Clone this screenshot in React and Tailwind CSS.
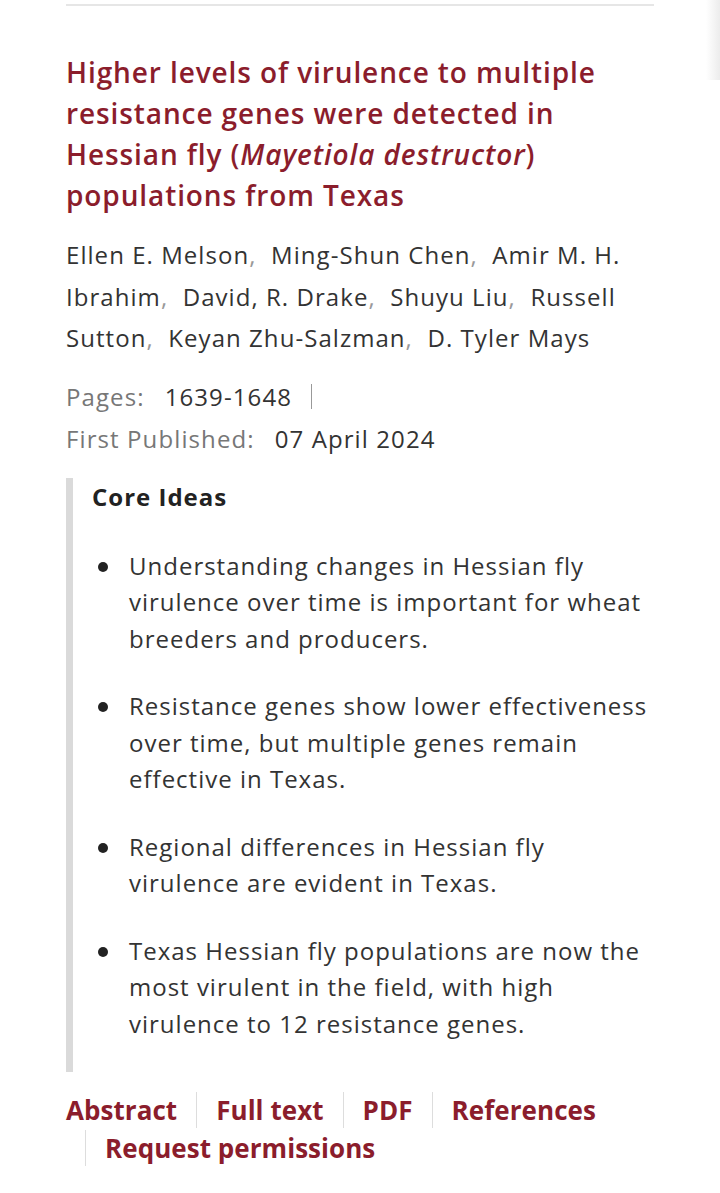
export default function App() {
  const ideas = [
    "Understanding changes in Hessian fly virulence over time is important for wheat breeders and producers.",
    "Resistance genes show lower effectiveness over time, but multiple genes remain effective in Texas.",
    "Regional differences in Hessian fly virulence are evident in Texas.",
    "Texas Hessian fly populations are now the most virulent in the field, with high virulence to 12 resistance genes.",
  ];

  const authors = [
    "Ellen E. Melson",
    "Ming-Shun Chen",
    "Amir M. H. Ibrahim",
    "David, R. Drake",
    "Shuyu Liu",
    "Russell Sutton",
    "Keyan Zhu-Salzman",
    "D. Tyler Mays",
  ];

  const links = ["Abstract", "Full text", "PDF", "References", "Request permissions"];

  return (
    <div
      className="relative min-h-[1193px] bg-white text-[#333333]"
      style={{ fontFamily: '"Open Sans", "Noto Sans", sans-serif' }}
    >
      {/* scroll shade at right edge */}
      <div className="absolute right-0 top-0 h-[80px] w-[14px] bg-gradient-to-r from-transparent to-[#ececec]" />

      <div className="px-[66px] pt-[4px]">
        <div className="border-t-2 border-[#e6e6e6]" />

        {/* TITLE */}
        <h1 className="mt-[46px] text-[28px] font-semibold leading-[41px] tracking-[0.9px] text-[#8b1d2c]">
          Higher levels of virulence to multiple resistance genes were detected in Hessian fly (
          <i>Mayetiola destructor</i>) populations from Texas
        </h1>

        {/* AUTHORS */}
        <p className="mt-[18px] text-[24px] leading-[41.5px] tracking-[1.05px]">
          {authors.map((a, i) => (
            <span key={a}>
              {a}
              {i < authors.length - 1 && <span className="text-[#999999]">,&nbsp; </span>}
            </span>
          ))}
        </p>

        {/* META */}
        <div className="mt-[17px] text-[24px] leading-[42px] tracking-[1.1px]">
          <div className="flex items-center">
            <span className="text-[#777777]">Pages:</span>
            <span className="ml-[20px]">1639-1648</span>
            <span className="ml-[19px] h-[25px] border-l border-[#999999]" />
          </div>
          <div>
            <span className="text-[#777777]">First Published:</span>
            <span className="ml-[20px]">07 April 2024</span>
          </div>
        </div>

        {/* CORE IDEAS */}
        <div className="mt-[18px] border-l-[7px] border-[#dadada] pl-[19px] pb-[30px]">
          <h3 className="pt-[1px] text-[24px] font-bold leading-[36px] tracking-[1px] text-[#222222]">
            Core Ideas
          </h3>
          <ul className="mt-[33px] flex flex-col gap-[31px]">
            {ideas.map((idea) => (
              <li key={idea} className="flex text-[24px] leading-[36.5px] tracking-[1px]">
                <span className="mt-[14px] ml-[6px] h-[10px] w-[10px] shrink-0 rounded-full bg-[#222222]" />
                <span className="ml-[21px]">{idea}</span>
              </li>
            ))}
          </ul>
        </div>

        {/* LINKS */}
        <div className="mt-[20px] flex flex-wrap gap-y-[2px] text-[26px] font-bold leading-[36px] tracking-[0.05px] text-[#8b1d2c]">
          {links.map((l, i) => (
            <span
              key={l}
              className={i === 0 ? "" : "ml-[19px] border-l border-[#dddddd] pl-[19px]"}
            >
              {l}
            </span>
          ))}
        </div>
      </div>
    </div>
  );
}
